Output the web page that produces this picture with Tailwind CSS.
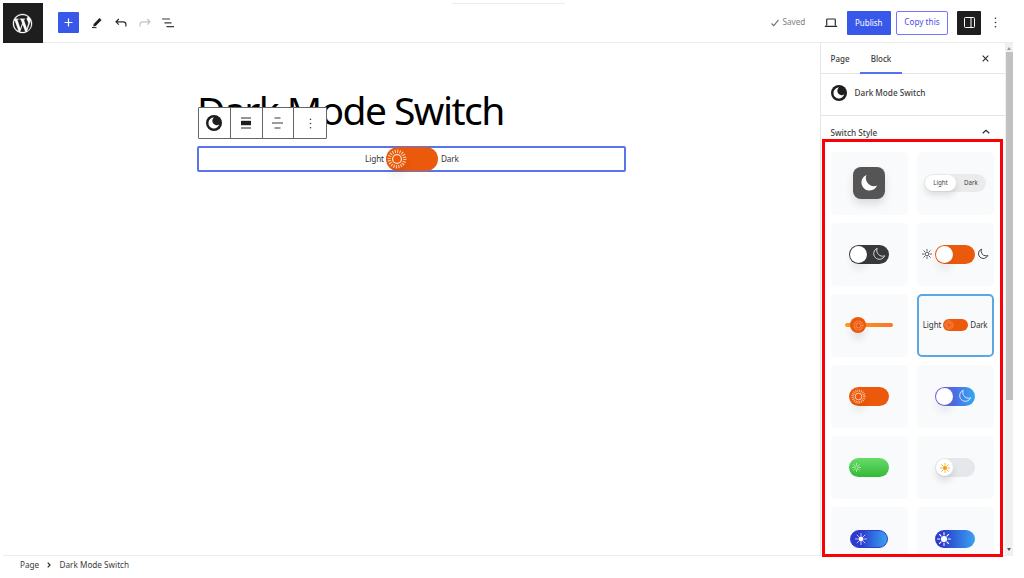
<!DOCTYPE html>
<html lang="en">
<head>
  <meta charset="UTF-8">
  <meta name="viewport" content="width=device-width, initial-scale=1.0">
  <title>Dark Mode Switch</title>
  <script src="https://cdn.jsdelivr.net/npm/@tailwindcss/browser@4"></script>
</head>
<body class="bg-white font-['Noto_Sans','Open_Sans',sans-serif] text-[8px] text-[#3c3c3c] overflow-hidden">

  <!-- shared icons -->
  <svg class="hidden">
    <symbol id="i-block" viewBox="0 0 16 16">
      <circle cx="8" cy="8" r="8" fill="#1e1e1e"/>
      <path d="M8 2.500A5.500 5.500 0 1 0 13.300 9.300 3.900 3.900 0 0 1 8 2.500Z" fill="#fff"/>
    </symbol>
    <symbol id="i-moon" viewBox="0 0 24 24">
      <path d="M21.700 15A9.700 9.700 0 0 1 18 15.750 9.750 9.750 0 0 1 9 2.250 9.750 9.750 0 1 0 21.700 15Z" stroke-linejoin="round"/>
    </symbol>
    <symbol id="i-sun" viewBox="0 0 24 24">
      <circle cx="12" cy="12" r="4.300"/>
      <path d="M12 1v4M12 19v4M1 12h4M19 12h4M4.200 4.200l2.900 2.900M16.900 16.900l2.900 2.900M4.200 19.800l2.900-2.900M16.900 7.100l2.900-2.900" stroke-linecap="round"/>
    </symbol>
    <symbol id="i-burst" viewBox="-12 -12 24 24">
      <circle r="5.300" fill="none" stroke-width="1.600"/>
      <circle r="9.300" fill="none" stroke-width="4" stroke-dasharray="1.150 1.772"/>
    </symbol>
  </svg>

  <div class="relative flex flex-col ml-[3px] mt-[3px] w-[1010px] h-[572px]">
    <div class="absolute left-[449px] top-0 w-[113px] h-px bg-[#ececec]"></div>

    <!-- top bar -->
    <header class="flex items-center h-10 border-b border-[#ececec] shrink-0">
      <div class="w-[39.500px] h-10 bg-[#1e1e1e] flex items-center justify-center self-start">
        <svg class="size-[23px]" viewBox="0 0 24 24" fill="#fff"><path d="M12.158 12.786l-2.698 7.840c.806.236 1.657.365 2.540.365 1.047 0 2.051-.180 2.986-.510-.024-.038-.046-.079-.065-.124l-2.763-7.571zM3.009 12c0 3.559 2.068 6.634 5.067 8.092L3.788 8.341C3.289 9.459 3.009 10.696 3.009 12zm15.060-.454c0-1.112-.399-1.881-.741-2.480-.456-.741-.883-1.368-.883-2.109 0-.826.627-1.596 1.510-1.596.040 0 .078.005.116.007C16.472 3.904 14.340 3.009 12 3.009c-3.141 0-5.904 1.612-7.512 4.052.211.007.410.011.579.011.940 0 2.396-.114 2.396-.114.484-.029.541.684.057.741 0 0-.487.057-1.029.085l3.274 9.739 1.968-5.901-1.401-3.838c-.484-.028-.943-.085-.943-.085-.485-.029-.428-.769.057-.741 0 0 1.484.114 2.368.114.940 0 2.397-.114 2.397-.114.485-.028.542.684.057.741 0 0-.488.057-1.029.085l3.249 9.665.897-2.996c.456-1.169.684-2.137.684-2.907zm1.820-3.206c.039.286.060.593.060.924 0 .912-.171 1.938-.684 3.220l-2.746 7.940c2.673-1.558 4.470-4.454 4.470-7.771 0-1.564-.399-3.033-1.100-4.313zM12 22C6.486 22 2 17.514 2 12S6.486 2 12 2s10 4.486 10 10-4.486 10-10 10z" stroke="#fff" stroke-width=".3"/></svg>
      </div>
      <button class="ml-[15.500px] w-[21px] h-[21px] rounded-[1px] bg-[#3858e9] flex items-center justify-center">
        <svg class="size-[9px]" viewBox="0 0 9 9" stroke="#fff" stroke-width="1.200"><path d="M4.500 .5v8M.5 4.500h8"/></svg>
      </button>
      <svg class="ml-[11.500px] size-3" viewBox="0 0 12 12"><path d="M2.700 6.900 8.500 1l2 2-5.800 5.900-2.500.6Z" fill="#1e1e1e"/><path d="M1 10.600h4.500" stroke="#1e1e1e" stroke-width="1"/></svg>
      <svg class="ml-[12px] size-3" viewBox="0 0 12 12" fill="none" stroke="#2b2b2b" stroke-width="1.200"><path d="M3.800 2 1 4.800l2.800 2.800M1 4.800h7.200q2.700 0 2.700 2.400v2.300"/></svg>
      <svg class="ml-[12px] size-3" viewBox="0 0 12 12" fill="none" stroke="#c4c4c4" stroke-width="1.200"><path d="M8.200 2 11 4.800 8.200 7.600M11 4.800H3.800q-2.700 0-2.700 2.400v2.300"/></svg>
      <svg class="ml-[11.500px] size-3" viewBox="0 0 12 12" stroke="#3a3a3a" stroke-width="1.200"><path d="M0 2h8M2.500 5.800h7M4.500 9.700h7.500"/></svg>

      <div class="ml-auto flex items-center">
        <svg class="w-2 h-2" viewBox="0 0 8 8" fill="none" stroke="#757575" stroke-width="1.200"><path d="M.5 4.500 2.800 6.700 7.500.8"/></svg>
        <span class="ml-1 w-[23px] text-[8.200px] text-[#808080] whitespace-nowrap">Saved</span>
        <svg class="ml-[18px] w-[14px] h-[10px]" viewBox="0 0 14 10" fill="none" stroke="#2b2b2b" stroke-width="1.200"><path d="M2.700 7.500V1.800q0-.8.800-.8h7q.8 0 .8.800v5.700M.8 8.400h12.400"/></svg>
        <button class="ml-[9.500px] w-[43.500px] h-6 rounded-[1px] bg-[#3858e9] text-white text-[8px]">Publish</button>
        <button class="ml-[5.500px] w-[52px] h-6 rounded-[2px] border border-[#7a74ff] text-[#4a4df0] text-[8.200px] whitespace-nowrap">Copy this</button>
        <button class="ml-[9px] w-6 h-6 rounded-[1px] bg-[#1e1e1e] flex items-center justify-center">
          <svg class="size-[11px]" viewBox="0 0 11 11" fill="none" stroke="#fff"><rect x=".5" y=".5" width="10" height="10" rx="1"/><path d="M7 .5v10"/></svg>
        </button>
        <svg class="ml-[12.500px] mr-[16.500px] w-[3px] h-[11px]" viewBox="0 0 3 11" fill="#2b2b2b"><circle cx="1.500" cy="1.300" r=".8"/><circle cx="1.500" cy="5.500" r=".8"/><circle cx="1.500" cy="9.700" r=".8"/></svg>
      </div>
    </header>

    <div class="flex flex-1 min-h-0">
      <!-- canvas -->
      <main class="flex-1 pl-[194px]">
        <div class="relative pt-[46px] h-[103px]">
          <h1 class="text-[39px] leading-[42px] text-black whitespace-nowrap tracking-[-1.550px]">Dark Mode Switch</h1>
          <!-- block toolbar floats over the title -->
          <div class="absolute left-[1px] top-[64px] w-[129px] h-[32px] bg-white border border-[#666] rounded-[1px] grid grid-cols-4 divide-x divide-[#666]">
            <div class="flex items-center justify-center"><svg class="size-4"><use href="#i-block"/></svg></div>
            <div class="flex items-center justify-center"><svg class="w-[10px] h-3" viewBox="0 0 10 12"><path d="M0 1h10M0 11h10" stroke="#2b2b2b" stroke-width="1"/><path d="M0 3.800h10v4.400H0Z" fill="#1e1e1e"/></svg></div>
            <div class="flex items-center justify-center"><svg class="w-[11px] h-3" viewBox="0 0 11 12" stroke="#3a3a3a" stroke-width="1.200"><path d="M2.500 1h6M0 6h11M2.500 11h6"/></svg></div>
            <div class="flex items-center justify-center"><svg class="w-[3px] h-[11px]" viewBox="0 0 3 11" fill="#3a3a3a"><circle cx="1.500" cy="1.300" r=".8"/><circle cx="1.500" cy="5.500" r=".8"/><circle cx="1.500" cy="9.700" r=".8"/></svg></div>
          </div>
        </div>
        <div class="w-[429px] h-[26px] border-2 border-[#5b74e9] rounded-[2px] flex items-center justify-center text-[8.200px] text-[#333]">
          <span class="w-[18px] mr-[3px] whitespace-nowrap tracking-[-0.100px]">Light</span>
          <div class="w-[52px] h-[24px] shrink-0 rounded-full bg-[#ea590c] flex items-center pl-px">
            <div class="size-5 rounded-full shadow-[0_8px_8px_rgba(0,0,0,0.060)]"><svg class="size-5 text-[#ffdcc2]" stroke="currentColor"><use href="#i-burst"/></svg></div>
          </div>
          <span class="w-[17px] ml-[3px] whitespace-nowrap tracking-[-0.150px]">Dark</span>
        </div>
      </main>

      <!-- settings sidebar -->
      <aside class="relative w-[185px] border-l border-[#e6e6e6] shrink-0">
        <div class="h-[31px] border-b border-[#e4e4e4] flex items-center font-medium text-[8px]">
          <span class="ml-[9.500px] w-[29.500px] mt-[2px]">Page</span>
          <div class="w-[42px] h-[31px] flex items-center justify-center border-b-2 border-[#5571ee]"><span class="mt-[3px]">Block</span></div>
          <svg class="ml-auto mr-[16px] size-[7px]" viewBox="0 0 7 7" stroke="#2b2b2b" stroke-width="1.100"><path d="M.7.7l5.600 5.600M6.300.7.7 6.300"/></svg>
        </div>
        <div class="h-[42px] border-b border-[#e4e4e4] flex items-center pb-1 pl-[9.500px] font-medium text-[8.200px]">
          <svg class="size-4"><use href="#i-block"/></svg>
          <span class="ml-2 mt-[2px] whitespace-nowrap">Dark Mode Switch</span>
        </div>
        <div class="h-[23px] flex items-end justify-between pl-[9.500px] pr-[15px] font-medium text-[8.200px] leading-3">
          <span>Switch Style</span>
          <svg class="w-2 h-[5px] mb-[5px]" viewBox="0 0 8 5" fill="none" stroke="#2b2b2b" stroke-width="1.200"><path d="M.7 4.300 4 1.200l3.300 3.100"/></svg>
        </div>
        <div class="h-[416px] pt-[12.500px] pl-[9.500px] overflow-hidden">
          <div class="grid grid-cols-[77px_77px] auto-rows-[63px] gap-x-[9px] gap-y-[8.150px]">

            <div class="bg-[#f9fafc] rounded-[5px] flex items-center justify-center">
              <div class="size-8 rounded-[8px] bg-[#555] shadow-[0_5px_8px_rgba(0,0,0,0.120)] flex items-center justify-center"><svg class="size-[20px]" fill="#fff"><use href="#i-moon"/></svg></div>
            </div>
            <div class="bg-[#f9fafc] rounded-[5px] flex items-center justify-center">
              <div class="w-[62px] h-[18px] rounded-full bg-[#ebebeb] flex items-center text-[6.200px] text-[#444]">
                <div class="w-[31px] h-4 ml-px rounded-full bg-white shadow-[0_4px_7px_rgba(0,0,0,0.120)] flex items-center justify-center">Light</div>
                <div class="flex-1 text-center">Dark</div>
              </div>
            </div>

            <div class="bg-[#f9fafc] rounded-[5px] flex items-center justify-center">
              <div class="w-10 h-[19px] rounded-full bg-[#38383d] flex items-center justify-between pl-px pr-[3px]">
                <div class="size-[17px] rounded-full bg-white shadow-[0_8px_7px_rgba(0,0,0,0.060)]"></div>
                <svg class="size-[14px]" fill="none" stroke="#ddd" stroke-width="1.700"><use href="#i-moon"/></svg>
              </div>
            </div>
            <div class="bg-[#f9fafc] rounded-[5px] flex items-center justify-center">
              <svg class="size-[10px]" fill="none" stroke="#333" stroke-width="1.800"><use href="#i-sun"/></svg>
              <div class="ml-[3px] mr-[2px] w-10 h-[19px] rounded-full bg-[#ea590c] flex items-center pl-px">
                <div class="size-[17px] rounded-full bg-white shadow-[0_8px_7px_rgba(0,0,0,0.060)]"></div>
              </div>
              <svg class="size-[12px]" fill="none" stroke="#333" stroke-width="1.800"><use href="#i-moon"/></svg>
            </div>

            <div class="bg-[#f9fafc] rounded-[5px] flex items-center justify-center">
              <div class="w-12 h-1 rounded-full bg-linear-to-r from-[#faa017] to-[#fb7429] flex items-center pl-[5px]">
                <div class="size-4 rounded-full bg-[#ea590c] shadow-[0_7px_7px_rgba(0,0,0,0.080)] flex items-center justify-center"><svg class="size-[11px] text-[#ff9f6b]" stroke="currentColor"><use href="#i-burst"/></svg></div>
              </div>
            </div>
            <div class="bg-[#f9fafc] rounded-[5px] border-2 border-[#5ba7e4] flex items-center justify-center text-[8px] text-[#333]">
              <span class="w-[18px] tracking-[-0.100px]">Light</span>
              <div class="ml-[2px] mr-[2.500px] w-[25px] h-[12px] shrink-0 rounded-full bg-[#ea590c] flex items-center pl-px"><svg class="size-[10px] text-[#ff9f6b]" stroke="currentColor"><use href="#i-burst"/></svg></div>
              <span class="w-[17px] tracking-[-0.200px]">Dark</span>
            </div>

            <div class="bg-[#f9fafc] rounded-[5px] flex items-center justify-center">
              <div class="w-10 h-[19px] rounded-full bg-[#ea590c] flex items-center pl-[2px]">
                <div class="size-[15px] rounded-full shadow-[0_8px_7px_rgba(0,0,0,0.060)]"><svg class="size-[15px] text-[#ffcfae]" stroke="currentColor"><use href="#i-burst"/></svg></div>
              </div>
            </div>
            <div class="bg-[#f9fafc] rounded-[5px] flex items-center justify-center">
              <div class="w-10 h-[19px] rounded-full bg-linear-to-r from-[#8058e0] via-[#4d6be4] to-[#2caaf2] flex items-center justify-between pl-px pr-[3px]">
                <div class="size-[17px] rounded-full bg-white shadow-[0_8px_7px_rgba(0,0,0,0.060)]"></div>
                <svg class="size-[14px]" fill="none" stroke="#d6ecff" stroke-width="1.700"><use href="#i-moon"/></svg>
              </div>
            </div>

            <div class="bg-[#f9fafc] rounded-[5px] flex items-center justify-center">
              <div class="w-10 h-[19px] rounded-full bg-linear-to-b from-[#66dc69] to-[#32b934] flex items-center pl-[3px]"><svg class="size-[9px]" fill="none" stroke="#d5f8d2" stroke-width="1.800"><use href="#i-sun"/></svg></div>
            </div>
            <div class="bg-[#f9fafc] rounded-[5px] flex items-center justify-center">
              <div class="w-10 h-[19px] rounded-full bg-[#e5e7eb] flex items-center pl-px">
                <div class="size-[17px] rounded-full bg-white shadow-[0_5px_7px_rgba(0,0,0,0.120)] flex items-center justify-center"><svg class="size-[10px]" fill="#f59e0b" stroke="#f59e0b" stroke-width="1.800"><use href="#i-sun"/></svg></div>
              </div>
            </div>

            <div class="bg-[#f9fafc] rounded-[5px] flex items-center justify-center">
              <div class="w-[38px] h-[18px] rounded-full border border-[#2d3ccc] bg-linear-to-r from-[#2d3ccc] from-30% to-[#3ca0f2] flex items-center pl-[4px]"><svg class="size-[12px]" fill="#fff" stroke="#fff" stroke-width="1.500"><use href="#i-sun"/></svg></div>
            </div>
            <div class="bg-[#f9fafc] rounded-[5px] flex items-center justify-center">
              <div class="w-10 h-[18px] rounded-full bg-linear-to-r from-[#2d3ccc] from-20% to-[#3ca0f2] flex items-center pl-[2px]"><svg class="size-[14px]" fill="#fff" stroke="#fff" stroke-width="1.800"><use href="#i-sun"/></svg></div>
            </div>

          </div>
        </div>
        <!-- highlight frame -->
        <div class="absolute left-[1px] top-[96px] w-[181px] h-[418px] border-3 border-[#fb0007]"></div>
      </aside>

      <!-- scrollbar -->
      <div class="w-2 bg-[#f0f0f0] flex flex-col items-center shrink-0">
        <div class="h-[9px] pt-1"><svg class="w-1 h-[3px]" viewBox="0 0 4 3"><path d="M0 3 2 0l2 3Z" fill="#9a9a9a"/></svg></div>
        <div class="w-[7px] h-[348px] bg-[#c1c1c1]"></div>
        <div class="mt-auto h-[7px]"><svg class="w-1 h-[3px]" viewBox="0 0 4 3"><path d="M0 0l2 3 2-3Z" fill="#555"/></svg></div>
      </div>
    </div>

    <!-- breadcrumb -->
    <footer class="h-5 border-t border-[#ececec] flex items-center pb-px pl-[17px] shrink-0 text-[8.200px]">
      <span class="w-[19px]">Page</span>
      <svg class="mx-2 w-[4px] h-[6px]" viewBox="0 0 4 6" fill="none" stroke="#2b2b2b" stroke-width="1.200"><path d="M.7.7 3 3 .7 5.300"/></svg>
      <span class="ml-[0.500px]">Dark Mode Switch</span>
    </footer>
  </div>
</body>
</html>
